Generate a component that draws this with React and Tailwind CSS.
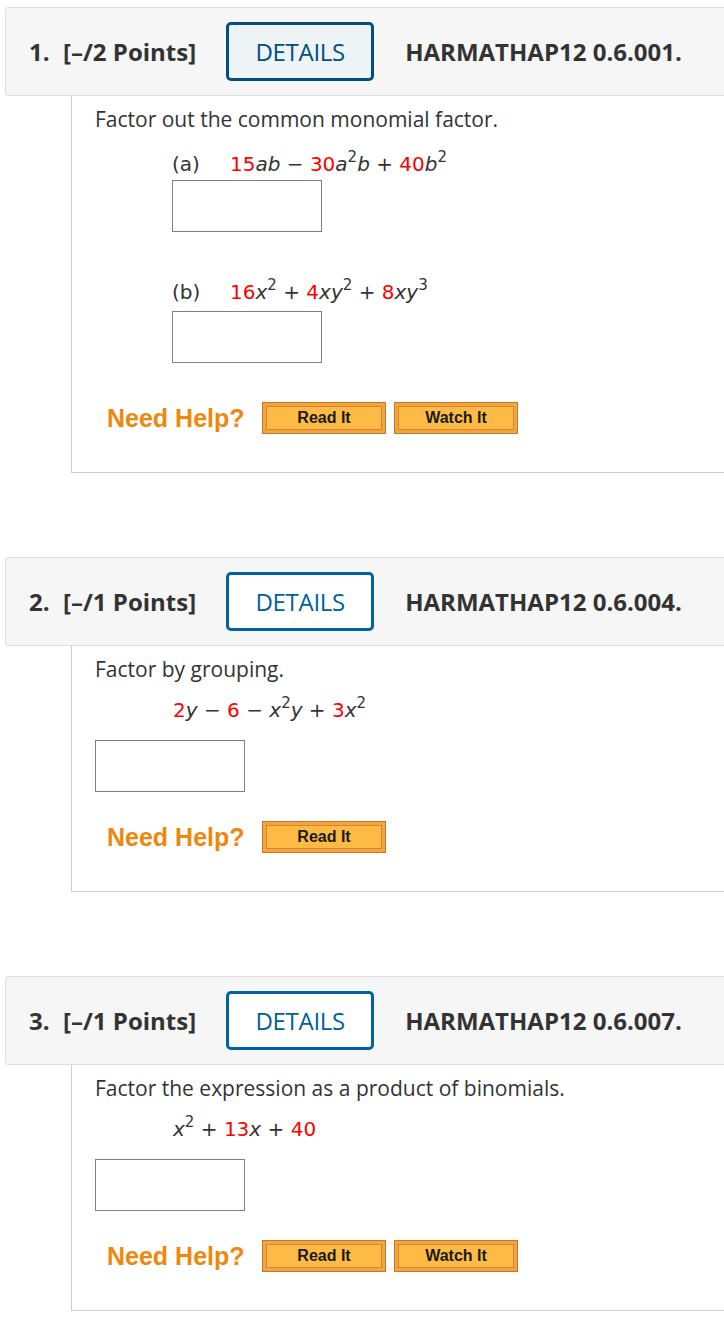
import React from "react";

const R = ({ children }) => <span className="text-[#ff0000]">{children}</span>;
const I = ({ children }) => <i className="italic">{children}</i>;
const Sup = ({ children }) => (
  <span className="relative top-[-9px] text-[15px] leading-none">{children}</span>
);

function Header({ num, pts, code, active }) {
  return (
    <div
      className="ml-[5px] w-[740px] h-[89px] border border-[#dddddd] rounded-[3px] bg-[#f6f6f6] flex items-center pl-[23px] text-[#333333]"
      style={{ fontFamily: '"Open Sans", sans-serif' }}
    >
      <span className="text-[24px] font-bold w-[34px]">{num}.</span>
      <span className="text-[24px] font-bold">[–/{pts} Points]</span>
      <div
        className={
          "ml-[30px] w-[148px] h-[59px] rounded-[5px] border-[3px] flex items-center justify-center text-[24px] tracking-[-0.3px] " +
          (active
            ? "border-[#004f7c] bg-[#eef3f6] text-[#004f7c]"
            : "border-[#0062a0] bg-white text-[#00609a]")
        }
      >
        DETAILS
      </div>
      <span className="ml-[31px] text-[24px] font-bold">{code}</span>
    </div>
  );
}

function Btn({ label }) {
  return (
    <div className="w-[124px] h-[32px] border border-[#c17a2c] bg-[#f7a23a] p-[3px]">
      <div
        className="h-full border border-[#c8893b] bg-[#fdbb46] flex items-center justify-center text-[16px] font-bold text-[#1a1a1a]"
        style={{ fontFamily: '"Liberation Sans", Arial, sans-serif' }}
      >
        {label}
      </div>
    </div>
  );
}

function Help({ watch }) {
  return (
    <div className="flex items-center h-[32px] pl-[12px]">
      <span
        className="text-[25px] font-bold text-[#f0870d] w-[155px]"
        style={{ fontFamily: '"Liberation Sans", Arial, sans-serif' }}
      >
        Need Help?
      </span>
      <div className="flex gap-[8px]">
        <Btn label="Read It" />
        {watch && <Btn label="Watch It" />}
      </div>
    </div>
  );
}

const Input = ({ cls }) => (
  <div className={"w-[150px] h-[52px] border border-[#808080] bg-white " + (cls || "")} />
);

const mathFont = { fontFamily: '"DejaVu Sans", Verdana, sans-serif' };

function Math({ children, cls }) {
  return (
    <div className={"text-[20px] leading-[28px] " + (cls || "")} style={mathFont}>
      {children}
    </div>
  );
}

function Content({ children }) {
  return (
    <div
      className="ml-[71px] w-[700px] border-l border-b border-[#cccccc] pl-[23px] pt-[9px] text-[21px] leading-[28px] text-[#333333]"
      style={{ fontFamily: '"Open Sans", sans-serif' }}
    >
      {children}
    </div>
  );
}

export default function App() {
  return (
    <div className="w-[724px] overflow-hidden bg-white pt-[7px] pb-[8px]">
      {/* Q1 */}
      <Header num="1" pts="2" code="HARMATHAP12 0.6.001." active />
      <Content>
        <div>Factor out the common monomial factor.</div>
        <Math cls="pl-[77px] mt-[17px] flex">
          <span className="w-[58px]">(a)</span>
          <span>
            <R>15</R>
            <I>ab</I> − <R>30</R>
            <I>a</I>
            <Sup>2</Sup>
            <I>b</I> + <R>40</R>
            <I>b</I>
            <Sup>2</Sup>
          </span>
        </Math>
        <Input cls="ml-[77px] mt-[2px]" />
        <Math cls="pl-[77px] mt-[46px] flex">
          <span className="w-[58px]">(b)</span>
          <span>
            <R>16</R>
            <I>x</I>
            <Sup>2</Sup> + <R>4</R>
            <I>xy</I>
            <Sup>2</Sup> + <R>8</R>
            <I>xy</I>
            <Sup>3</Sup>
          </span>
        </Math>
        <Input cls="ml-[77px] mt-[5px]" />
        <div className="mt-[39px] pb-[38px]">
          <Help watch />
        </div>
      </Content>

      <div className="h-[84px]" />

      {/* Q2 */}
      <Header num="2" pts="1" code="HARMATHAP12 0.6.004." />
      <Content>
        <div>Factor by grouping.</div>
        <Math cls="pl-[78px] mt-[13px]">
          <R>2</R>
          <I>y</I> − <R>6</R> − <I>x</I>
          <Sup>2</Sup>
          <I>y</I> + <R>3</R>
          <I>x</I>
          <Sup>2</Sup>
        </Math>
        <Input cls="mt-[16px]" />
        <div className="mt-[29px] pb-[38px]">
          <Help />
        </div>
      </Content>

      <div className="h-[84px]" />

      {/* Q3 */}
      <Header num="3" pts="1" code="HARMATHAP12 0.6.007." />
      <Content>
        <div>Factor the expression as a product of binomials.</div>
        <Math cls="pl-[78px] mt-[13px]">
          <I>x</I>
          <Sup>2</Sup> + <R>13</R>
          <I>x</I> + <R>40</R>
        </Math>
        <Input cls="mt-[16px]" />
        <div className="mt-[29px] pb-[38px]">
          <Help watch />
        </div>
      </Content>
    </div>
  );
}
